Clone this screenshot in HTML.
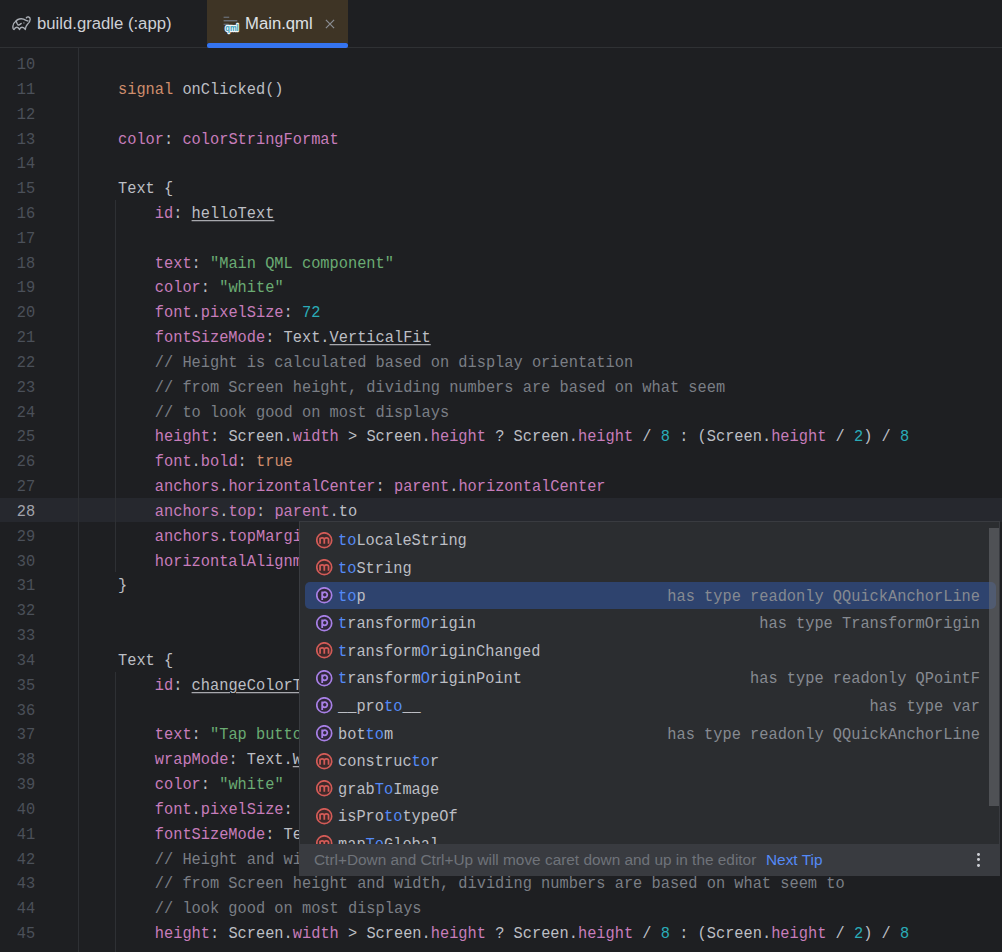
<!DOCTYPE html>
<html><head><meta charset="utf-8"><style>
*{margin:0;padding:0;box-sizing:border-box}
html,body{width:1002px;height:952px;overflow:hidden;background:#1E1F22}
body{position:relative;font-family:"Liberation Mono",monospace;}
.abs{position:absolute}
#tabs{position:absolute;left:0;top:0;width:1002px;height:48px;border-bottom:1px solid #2F3134;}
.tabtxt{position:absolute;font-family:"Liberation Sans",sans-serif;font-size:16.7px;color:#CED0D6;white-space:pre;line-height:20px}
#tab2{position:absolute;left:207px;top:0;width:141px;height:43px;background:#3E3425}
#tabbar{position:absolute;left:207px;top:43px;width:141px;height:5px;background:#3574F0;border-radius:2px}
.ln{position:absolute;left:0;transform:scaleY(1.09);transform-origin:0 16.49px;width:35.1px;text-align:right;font-size:15.33px;line-height:24.83px;height:24.83px;color:#4B5059;white-space:pre}
.ln.cur{color:#A1A3AB}
.cl{position:absolute;left:81.2px;transform:scaleY(1.09);transform-origin:0 16.49px;font-size:15.33px;line-height:24.83px;height:24.83px;color:#BCBEC4;white-space:pre}
.k{color:#CF8E6D} .p{color:#C77DBB} .s{color:#6AAB73} .n{color:#2AACB8} .c{color:#7A7E85}
.u{text-decoration:underline;text-underline-offset:2px;text-decoration-thickness:1px}
#curline{position:absolute;left:0;top:497.7px;width:1002px;height:24.4px;background:#26282E}
#gsep{position:absolute;left:78px;top:48px;width:1px;height:904px;background:#2E3034}
#guide1{position:absolute;left:115px;top:199.7px;width:1px;height:372.5px;background:#2E3034}
#guide2{position:absolute;left:115px;top:671.5px;width:1px;height:281px;background:#2E3034}
#popup{position:absolute;left:299px;top:521px;width:701px;height:355px;background:#2B2D30;border:1px solid #393B40;overflow:hidden}
.sel{position:absolute;left:5px;width:691px;height:27.1px;background:#2E436E;border-radius:5px}
.ic2{position:absolute;left:15.65px}
.ic{position:absolute;left:16px;width:16.5px;height:16.5px;border-radius:50%;border:1.6px solid;font-family:"Liberation Sans",sans-serif;font-size:12px;line-height:13px;text-align:center}
.ic.m{border-color:#DB5C5C;background:#3F2A2D;color:#DB5C5C}
.ic.p{border-color:#B189F5;background:#2D2538;color:#B189F5}
.it{position:absolute;left:38px;transform:scaleY(1.09);transform-origin:0 16.49px;font-size:15.33px;line-height:24.83px;color:#BCBEC4;white-space:pre}
.hl{color:#548AF7}
.ty{position:absolute;right:19px;transform:scaleY(1.09);transform-origin:0 16.49px;font-size:15.33px;line-height:24.83px;color:#868A91;white-space:pre}
#sb{position:absolute;left:689px;top:5.5px;width:10px;height:278px;background:rgba(110,112,117,0.55)}
#hint{position:absolute;left:0;top:322px;width:700px;height:33px;background:#393B40}
#hint .t{position:absolute;left:14px;top:6px;font-family:"Liberation Sans",sans-serif;font-size:15.4px;line-height:20px;color:#6F737A;white-space:pre}
#hint .t b{font-weight:normal;color:#548AF7}
.dot{position:absolute;left:677.4px;width:2.8px;height:2.8px;background:#CED0D6;border-radius:50%}
</style></head><body>
<div id="tabs">
  <svg class="abs" style="left:8px;top:12px" width="28" height="22" viewBox="0 0 28 22" fill="none" stroke="#ABAFB6" stroke-width="1.35" stroke-linecap="round" stroke-linejoin="round"><path d="M8.1 9.0C9.5 7.0 13.0 6.3 15.5 7.2C17.0 7.8 18.3 9.0 20.0 9.0"/><path d="M18.3 5.8C19.3 4.5 22.2 4.5 22.2 7.2C22.2 9.5 20.8 11.2 19.3 12.6C18.2 13.7 17.5 15.0 17.3 17.5Q16.2 15.2 14.0 15.2Q12.2 15.2 11.5 17.5Q10.5 15.2 8.9 15.2Q7.0 15.2 6.1 17.5C5.0 17.5 4.8 15.5 4.9 14.2C5.0 12.2 6.4 10.2 8.1 9.0"/><path d="M8.3 9.5C8.8 11.0 9.3 12.6 10.0 13.0C11.0 13.3 12.3 12.2 13.2 11.5"/><circle cx="15.9" cy="10.9" r="0.6" fill="#ABAFB6" stroke="none"/></svg>
  <div class="tabtxt" style="left:37px;top:14.4px">build.gradle (:app)</div>
  <div id="tab2"></div>
  <div id="tabbar"></div>
  <svg class="abs" style="left:218px;top:10px" width="28" height="26" viewBox="0 0 28 26"><rect x="5.6" y="6.7" width="5.6" height="1.1" fill="#6E7581"/><rect x="5.6" y="10.1" width="13.7" height="1.3" fill="#6E7581"/><rect x="5.6" y="13.7" width="5" height="1.1" fill="#6E7581"/><text x="7.3" y="20.6" font-family="Liberation Sans" font-weight="bold" font-size="9.6" textLength="13.4" lengthAdjust="spacingAndGlyphs" fill="#3A9DBB" stroke="#F2F8FA" stroke-width="2.3" stroke-linejoin="round" paint-order="stroke">qml</text></svg>
  <div class="tabtxt" style="left:245px;top:14.4px;color:#DFE1E5">Main.qml</div>
  <svg class="abs" style="left:324px;top:17.6px" width="12" height="12" viewBox="0 0 12 12"><path d="M1.9 1.9L10.1 10.1M10.1 1.9L1.9 10.1" stroke="#8A8D93" stroke-width="1.2"/></svg>
</div>
<div id="curline"></div>
<div id="gsep"></div>
<div id="guide1"></div>
<div id="guide2"></div>
<div class="ln" style="top:53.01px">10</div><div class="ln" style="top:77.84px">11</div><div class="cl" style="top:77.84px">    <span class="k">signal</span> onClicked()</div><div class="ln" style="top:102.67px">12</div><div class="ln" style="top:127.50px">13</div><div class="cl" style="top:127.50px">    <span class="p">color</span>: <span class="p">colorStringFormat</span></div><div class="ln" style="top:152.33px">14</div><div class="ln" style="top:177.16px">15</div><div class="cl" style="top:177.16px">    Text {</div><div class="ln" style="top:201.99px">16</div><div class="cl" style="top:201.99px">        <span class="p">id</span>: <span class="u">helloText</span></div><div class="ln" style="top:226.82px">17</div><div class="ln" style="top:251.65px">18</div><div class="cl" style="top:251.65px">        <span class="p">text</span>: <span class="s">&quot;Main QML component&quot;</span></div><div class="ln" style="top:276.48px">19</div><div class="cl" style="top:276.48px">        <span class="p">color</span>: <span class="s">&quot;white&quot;</span></div><div class="ln" style="top:301.31px">20</div><div class="cl" style="top:301.31px">        <span class="p">font</span>.<span class="p">pixelSize</span>: <span class="n">72</span></div><div class="ln" style="top:326.14px">21</div><div class="cl" style="top:326.14px">        <span class="p">fontSizeMode</span>: Text.<span class="u">VerticalFit</span></div><div class="ln" style="top:350.97px">22</div><div class="cl" style="top:350.97px">        <span class="c">// Height is calculated based on display orientation</span></div><div class="ln" style="top:375.80px">23</div><div class="cl" style="top:375.80px">        <span class="c">// from Screen height, dividing numbers are based on what seem</span></div><div class="ln" style="top:400.63px">24</div><div class="cl" style="top:400.63px">        <span class="c">// to look good on most displays</span></div><div class="ln" style="top:425.46px">25</div><div class="cl" style="top:425.46px">        <span class="p">height</span>: Screen.<span class="p">width</span> &gt; Screen.<span class="p">height</span> ? Screen.<span class="p">height</span> / <span class="n">8</span> : (Screen.<span class="p">height</span> / <span class="n">2</span>) / <span class="n">8</span></div><div class="ln" style="top:450.29px">26</div><div class="cl" style="top:450.29px">        <span class="p">font</span>.<span class="p">bold</span>: <span class="k">true</span></div><div class="ln" style="top:475.12px">27</div><div class="cl" style="top:475.12px">        <span class="p">anchors</span>.<span class="p">horizontalCenter</span>: <span class="p">parent</span>.<span class="p">horizontalCenter</span></div><div class="ln cur" style="top:499.95px">28</div><div class="cl" style="top:499.95px">        <span class="p">anchors</span>.<span class="p">top</span>: <span class="p">parent</span>.to</div><div class="ln" style="top:524.78px">29</div><div class="cl" style="top:524.78px">        <span class="p">anchors</span>.<span class="p">topMargin</span>: <span class="n">20</span></div><div class="ln" style="top:549.61px">30</div><div class="cl" style="top:549.61px">        <span class="p">horizontalAlignment</span>: Text.<span class="u">AlignHCenter</span></div><div class="ln" style="top:574.44px">31</div><div class="cl" style="top:574.44px">    }</div><div class="ln" style="top:599.27px">32</div><div class="ln" style="top:624.10px">33</div><div class="ln" style="top:648.93px">34</div><div class="cl" style="top:648.93px">    Text {</div><div class="ln" style="top:673.76px">35</div><div class="cl" style="top:673.76px">        <span class="p">id</span>: <span class="u">changeColorText</span></div><div class="ln" style="top:698.59px">36</div><div class="ln" style="top:723.42px">37</div><div class="cl" style="top:723.42px">        <span class="p">text</span>: <span class="s">&quot;Tap button to change color&quot;</span></div><div class="ln" style="top:748.25px">38</div><div class="cl" style="top:748.25px">        <span class="p">wrapMode</span>: Text.<span class="u">WordWrap</span></div><div class="ln" style="top:773.08px">39</div><div class="cl" style="top:773.08px">        <span class="p">color</span>: <span class="s">&quot;white&quot;</span></div><div class="ln" style="top:797.91px">40</div><div class="cl" style="top:797.91px">        <span class="p">font</span>.<span class="p">pixelSize</span>: <span class="n">72</span></div><div class="ln" style="top:822.74px">41</div><div class="cl" style="top:822.74px">        <span class="p">fontSizeMode</span>: Text.<span class="u">Fit</span></div><div class="ln" style="top:847.57px">42</div><div class="cl" style="top:847.57px">        <span class="c">// Height and width are calculated based on display orientation</span></div><div class="ln" style="top:872.40px">43</div><div class="cl" style="top:872.40px">        <span class="c">// from Screen height and width, dividing numbers are based on what seem to</span></div><div class="ln" style="top:897.23px">44</div><div class="cl" style="top:897.23px">        <span class="c">// look good on most displays</span></div><div class="ln" style="top:922.06px">45</div><div class="cl" style="top:922.06px">        <span class="p">height</span>: Screen.<span class="p">width</span> &gt; Screen.<span class="p">height</span> ? Screen.<span class="p">height</span> / <span class="n">8</span> : (Screen.<span class="p">height</span> / <span class="n">2</span>) / <span class="n">8</span></div>
<div id="popup">
<svg class="ic2" style="top:9.85px" width="17" height="17" viewBox="0 0 17 17"><circle cx="8.25" cy="8.25" r="7.45" fill="#3C292A" stroke="#D35B57" stroke-width="1.7"/><path d="M4.05 11.65V5.75M4.05 7.4C4.05 6.0 5.0 5.75 6.1 5.75C7.4 5.75 8.3 6.2 8.3 7.5V11.65M8.3 7.4C8.3 6.0 9.2 5.75 10.4 5.75C11.7 5.75 12.55 6.2 12.55 7.5V11.65" fill="none" stroke="#D35B57" stroke-width="1.75"/></svg><div class="it" style="top:7.41px"><span class="hl">to</span>LocaleString</div><svg class="ic2" style="top:37.45px" width="17" height="17" viewBox="0 0 17 17"><circle cx="8.25" cy="8.25" r="7.45" fill="#3C292A" stroke="#D35B57" stroke-width="1.7"/><path d="M4.05 11.65V5.75M4.05 7.4C4.05 6.0 5.0 5.75 6.1 5.75C7.4 5.75 8.3 6.2 8.3 7.5V11.65M8.3 7.4C8.3 6.0 9.2 5.75 10.4 5.75C11.7 5.75 12.55 6.2 12.55 7.5V11.65" fill="none" stroke="#D35B57" stroke-width="1.75"/></svg><div class="it" style="top:35.01px"><span class="hl">to</span>String</div><div class="sel" style="top:59.80px"></div><svg class="ic2" style="top:65.05px" width="17" height="17" viewBox="0 0 17 17"><circle cx="8.25" cy="8.25" r="7.45" fill="#2F2739" stroke="#A880E6" stroke-width="1.7"/><path d="M6.2 4.6V13.0M6.2 7.75A2.55 2.6 0 1 1 11.3 7.75A2.55 2.6 0 1 1 6.2 7.75" fill="none" stroke="#A880E6" stroke-width="1.8"/></svg><div class="it" style="top:62.61px"><span class="hl">to</span>p</div><div class="ty" style="top:62.61px">has type readonly QQuickAnchorLine</div><svg class="ic2" style="top:92.65px" width="17" height="17" viewBox="0 0 17 17"><circle cx="8.25" cy="8.25" r="7.45" fill="#2F2739" stroke="#A880E6" stroke-width="1.7"/><path d="M6.2 4.6V13.0M6.2 7.75A2.55 2.6 0 1 1 11.3 7.75A2.55 2.6 0 1 1 6.2 7.75" fill="none" stroke="#A880E6" stroke-width="1.8"/></svg><div class="it" style="top:90.21px"><span class="hl">t</span>ransform<span class="hl">O</span>rigin</div><div class="ty" style="top:90.21px">has type TransformOrigin</div><svg class="ic2" style="top:120.25px" width="17" height="17" viewBox="0 0 17 17"><circle cx="8.25" cy="8.25" r="7.45" fill="#3C292A" stroke="#D35B57" stroke-width="1.7"/><path d="M4.05 11.65V5.75M4.05 7.4C4.05 6.0 5.0 5.75 6.1 5.75C7.4 5.75 8.3 6.2 8.3 7.5V11.65M8.3 7.4C8.3 6.0 9.2 5.75 10.4 5.75C11.7 5.75 12.55 6.2 12.55 7.5V11.65" fill="none" stroke="#D35B57" stroke-width="1.75"/></svg><div class="it" style="top:117.81px"><span class="hl">t</span>ransform<span class="hl">O</span>riginChanged</div><svg class="ic2" style="top:147.85px" width="17" height="17" viewBox="0 0 17 17"><circle cx="8.25" cy="8.25" r="7.45" fill="#2F2739" stroke="#A880E6" stroke-width="1.7"/><path d="M6.2 4.6V13.0M6.2 7.75A2.55 2.6 0 1 1 11.3 7.75A2.55 2.6 0 1 1 6.2 7.75" fill="none" stroke="#A880E6" stroke-width="1.8"/></svg><div class="it" style="top:145.41px"><span class="hl">t</span>ransform<span class="hl">O</span>riginPoint</div><div class="ty" style="top:145.41px">has type readonly QPointF</div><svg class="ic2" style="top:175.45px" width="17" height="17" viewBox="0 0 17 17"><circle cx="8.25" cy="8.25" r="7.45" fill="#2F2739" stroke="#A880E6" stroke-width="1.7"/><path d="M6.2 4.6V13.0M6.2 7.75A2.55 2.6 0 1 1 11.3 7.75A2.55 2.6 0 1 1 6.2 7.75" fill="none" stroke="#A880E6" stroke-width="1.8"/></svg><div class="it" style="top:173.01px">__pro<span class="hl">to</span>__</div><div class="ty" style="top:173.01px">has type var</div><svg class="ic2" style="top:203.05px" width="17" height="17" viewBox="0 0 17 17"><circle cx="8.25" cy="8.25" r="7.45" fill="#2F2739" stroke="#A880E6" stroke-width="1.7"/><path d="M6.2 4.6V13.0M6.2 7.75A2.55 2.6 0 1 1 11.3 7.75A2.55 2.6 0 1 1 6.2 7.75" fill="none" stroke="#A880E6" stroke-width="1.8"/></svg><div class="it" style="top:200.61px">bot<span class="hl">to</span>m</div><div class="ty" style="top:200.61px">has type readonly QQuickAnchorLine</div><svg class="ic2" style="top:230.65px" width="17" height="17" viewBox="0 0 17 17"><circle cx="8.25" cy="8.25" r="7.45" fill="#3C292A" stroke="#D35B57" stroke-width="1.7"/><path d="M4.05 11.65V5.75M4.05 7.4C4.05 6.0 5.0 5.75 6.1 5.75C7.4 5.75 8.3 6.2 8.3 7.5V11.65M8.3 7.4C8.3 6.0 9.2 5.75 10.4 5.75C11.7 5.75 12.55 6.2 12.55 7.5V11.65" fill="none" stroke="#D35B57" stroke-width="1.75"/></svg><div class="it" style="top:228.21px">construc<span class="hl">to</span>r</div><svg class="ic2" style="top:258.25px" width="17" height="17" viewBox="0 0 17 17"><circle cx="8.25" cy="8.25" r="7.45" fill="#3C292A" stroke="#D35B57" stroke-width="1.7"/><path d="M4.05 11.65V5.75M4.05 7.4C4.05 6.0 5.0 5.75 6.1 5.75C7.4 5.75 8.3 6.2 8.3 7.5V11.65M8.3 7.4C8.3 6.0 9.2 5.75 10.4 5.75C11.7 5.75 12.55 6.2 12.55 7.5V11.65" fill="none" stroke="#D35B57" stroke-width="1.75"/></svg><div class="it" style="top:255.81px">grab<span class="hl">To</span>Image</div><svg class="ic2" style="top:285.85px" width="17" height="17" viewBox="0 0 17 17"><circle cx="8.25" cy="8.25" r="7.45" fill="#3C292A" stroke="#D35B57" stroke-width="1.7"/><path d="M4.05 11.65V5.75M4.05 7.4C4.05 6.0 5.0 5.75 6.1 5.75C7.4 5.75 8.3 6.2 8.3 7.5V11.65M8.3 7.4C8.3 6.0 9.2 5.75 10.4 5.75C11.7 5.75 12.55 6.2 12.55 7.5V11.65" fill="none" stroke="#D35B57" stroke-width="1.75"/></svg><div class="it" style="top:283.41px">isPro<span class="hl">to</span>typeOf</div><svg class="ic2" style="top:313.45px" width="17" height="17" viewBox="0 0 17 17"><circle cx="8.25" cy="8.25" r="7.45" fill="#3C292A" stroke="#D35B57" stroke-width="1.7"/><path d="M4.05 11.65V5.75M4.05 7.4C4.05 6.0 5.0 5.75 6.1 5.75C7.4 5.75 8.3 6.2 8.3 7.5V11.65M8.3 7.4C8.3 6.0 9.2 5.75 10.4 5.75C11.7 5.75 12.55 6.2 12.55 7.5V11.65" fill="none" stroke="#D35B57" stroke-width="1.75"/></svg><div class="it" style="top:311.01px">map<span class="hl">To</span>Global</div>
<div id="sb"></div>
<div id="hint"><div class="t" style="left:14px">Ctrl+Down and Ctrl+Up will move caret down and up in the editor</div><div class="t" style="left:466px;color:#548AF7">Next Tip</div>
<div class="dot" style="top:8.8px"></div><div class="dot" style="top:14.4px"></div><div class="dot" style="top:20.1px"></div></div>
</div>
</body></html>
